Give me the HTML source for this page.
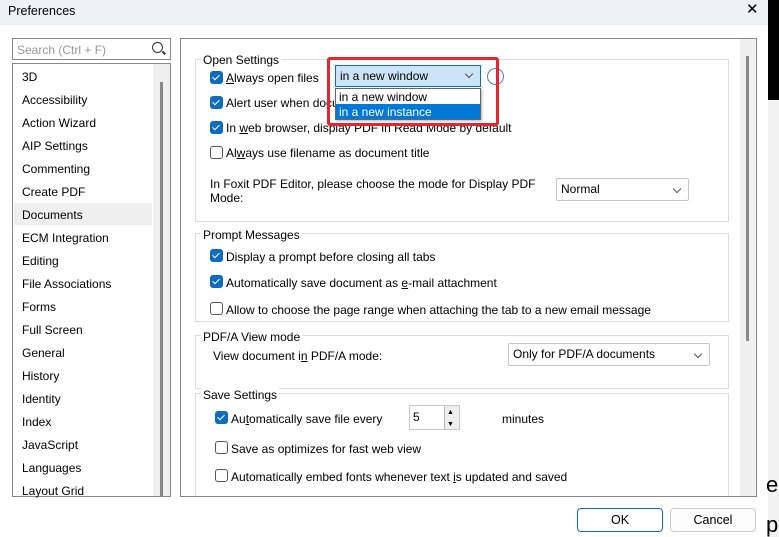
<!DOCTYPE html><html><head><style>
*{box-sizing:border-box;margin:0;padding:0}
body{width:779px;height:537px;overflow:hidden;background:#fff;font-family:"Liberation Sans",sans-serif;font-size:12px;color:#000;position:relative}
.a{position:absolute;white-space:nowrap;line-height:16px;margin-top:1px}
.cb{position:absolute;width:13px;height:13px;border-radius:3px;background:#0f6cbd}
.cb::after{content:"";position:absolute;left:4px;top:2px;width:3px;height:6px;border:solid #fff;border-width:0 1.5px 1.5px 0;transform:rotate(45deg)}
.cu{position:absolute;width:13px;height:13px;border-radius:3px;border:1px solid #555;background:#fff}
.grp{position:absolute;border:1px solid #dcdcdc}
.gl{position:absolute;background:#fff;padding:0 2px;line-height:14px;margin-top:1px}
.sel{position:absolute;border:1px solid #c8c8c8;border-radius:2px;background:#fff;padding-left:4px;line-height:21px}
.chev{position:absolute;right:8px;top:7px;width:6px;height:6px;border:solid #555;border-width:0 1px 1px 0;transform:rotate(45deg)}
u{text-decoration:underline}
.li{position:absolute;left:22px}
</style></head><body>
<div style="position:absolute;left:0;top:0;width:768px;height:25px;background:#eef2f7"></div>
<div class="a" style="left:8px;top:2px;font-size:12.5px">Preferences</div>
<div class="a" style="left:746px;top:1px;font-size:15px;font-weight:300">✕</div>
<div style="position:absolute;left:768px;top:0;width:11px;height:100px;background:#000"></div>
<div style="position:absolute;left:768px;top:100px;width:11px;height:437px;background:#f2f2f2"></div>
<div class="a" style="left:766px;top:476px;font-size:22px">e</div>
<div class="a" style="left:766px;top:516px;font-size:22px">p</div>

<div style="position:absolute;left:12px;top:38px;width:159px;height:22px;border:1px solid #888"></div>
<div class="a" style="left:17px;top:41px;color:#999">Search (Ctrl + F)</div>
<div style="position:absolute;left:152px;top:42px;width:11px;height:11px;border:1.5px solid #333;border-radius:50%"></div>
<div style="position:absolute;left:162px;top:52px;width:4px;height:1.5px;background:#333;transform:rotate(45deg)"></div>

<div style="position:absolute;left:12px;top:63px;width:159px;height:434px;border:1px solid #888"></div>
<div style="position:absolute;left:153px;top:64px;width:17px;height:432px;background:#f0f0f0"></div>
<div style="position:absolute;left:160px;top:82px;width:3px;height:414px;background:#888"></div>
<div style="position:absolute;left:14px;top:203px;width:138px;height:22px;background:#efefef"></div>
<div class="li a" style="top:68px">3D</div>
<div class="li a" style="top:91px">Accessibility</div>
<div class="li a" style="top:114px">Action Wizard</div>
<div class="li a" style="top:137px">AIP Settings</div>
<div class="li a" style="top:160px">Commenting</div>
<div class="li a" style="top:183px">Create PDF</div>
<div class="li a" style="top:206px">Documents</div>
<div class="li a" style="top:229px">ECM Integration</div>
<div class="li a" style="top:252px">Editing</div>
<div class="li a" style="top:275px">File Associations</div>
<div class="li a" style="top:298px">Forms</div>
<div class="li a" style="top:321px">Full Screen</div>
<div class="li a" style="top:344px">General</div>
<div class="li a" style="top:367px">History</div>
<div class="li a" style="top:390px">Identity</div>
<div class="li a" style="top:413px">Index</div>
<div class="li a" style="top:436px">JavaScript</div>
<div class="li a" style="top:459px">Languages</div>
<div class="li a" style="top:482px">Layout Grid</div>

<div style="position:absolute;left:180px;top:38px;width:577px;height:459px;border:1px solid #888"></div>
<div style="position:absolute;left:740px;top:39px;width:16px;height:457px;background:#f0f0f0"></div>
<div style="position:absolute;left:746px;top:56px;width:3px;height:285px;background:#888"></div>

<div class="grp" style="left:195px;top:59px;width:534px;height:163px"></div>
<div class="gl" style="left:201px;top:52px">Open Settings</div>
<div class="cb" style="left:210px;top:71px"></div><div class="a" style="left:226px;top:69px"><u>A</u>lways open files</div>
<div class="cb" style="left:210px;top:96px"></div><div class="a" style="left:226px;top:94px">Alert user when docu</div>
<div class="cb" style="left:210px;top:121px"></div><div class="a" style="left:226px;top:119px">In <u>w</u>eb browser, display PDF in Read Mode by default</div>
<div class="cu" style="left:210px;top:146px"></div><div class="a" style="left:226px;top:144px">Al<u>w</u>ays use filename as document title</div>
<div class="a" style="left:210px;top:175px">In Foxit PDF Editor, please choose the mode for Display PDF</div>
<div class="a" style="left:210px;top:189px">Mode:</div>
<div class="sel" style="left:556px;top:178px;width:133px;height:23px">Normal<span class="chev"></span></div>

<div style="position:absolute;left:335px;top:65px;width:146px;height:22px;background:#cce4f7;border:1px solid #0f6cbd;padding-left:4px;line-height:21px">in a new window<span class="chev" style="right:8px;top:5px"></span></div>
<div style="position:absolute;left:487px;top:68px;width:17px;height:17px;border:1.5px solid #4a7fd4;border-radius:50%"></div>
<div style="position:absolute;left:335px;top:88px;width:146px;height:32px;background:#fff;border:1px solid #666;box-shadow:1px 1px 2px rgba(0,0,0,.3)"></div>
<div class="a" style="left:339px;top:88px">in a new window</div>
<div style="position:absolute;left:336px;top:104px;width:144px;height:15px;background:#0078d7"></div>
<div class="a" style="left:339px;top:103px;color:#fff">in a new instance</div>
<div style="position:absolute;left:327px;top:57px;width:172px;height:69px;border:3px solid #e8242e;border-radius:3px"></div>

<div class="grp" style="left:195px;top:233px;width:534px;height:89px"></div>
<div class="gl" style="left:201px;top:227px">Prompt Messages</div>
<div class="cb" style="left:210px;top:249px"></div><div class="a" style="left:226px;top:248px">Display a prompt before closing all tabs</div>
<div class="cb" style="left:210px;top:275px"></div><div class="a" style="left:226px;top:274px">Automatically save document as <u>e</u>-mail attachment</div>
<div class="cu" style="left:210px;top:302px"></div><div class="a" style="left:226px;top:301px">Allow to choose the page range when attaching the tab to a new email message</div>

<div class="grp" style="left:195px;top:335px;width:534px;height:54px"></div>
<div class="gl" style="left:201px;top:329px">PDF/A View mode</div>
<div class="a" style="left:213px;top:347px">View document i<u>n</u> PDF/A mode:</div>
<div class="sel" style="left:508px;top:343px;width:202px;height:23px">Only for PDF/A documents<span class="chev"></span></div>

<div class="grp" style="left:195px;top:393px;width:534px;height:110px"></div>
<div class="gl" style="left:201px;top:387px">Save Settings</div>
<div class="cb" style="left:215px;top:411px"></div><div class="a" style="left:231px;top:410px">Au<u>t</u>omatically save file every</div>
<div style="position:absolute;left:409px;top:405px;width:51px;height:25px;border:1px solid #c8c8c8;background:#fff"></div>
<div class="a" style="left:413px;top:408px">5</div>
<div style="position:absolute;left:444px;top:406px;width:15px;height:23px;background:#eee;border-left:1px solid #bbb"></div>
<div class="a" style="left:447px;top:404px;font-size:7px">▲</div>
<div class="a" style="left:447px;top:416px;font-size:7px">▼</div>
<div class="a" style="left:502px;top:410px">minutes</div>
<div class="cu" style="left:215px;top:441px"></div><div class="a" style="left:231px;top:440px">Save as optimizes for fast web view</div>
<div class="cu" style="left:215px;top:469px"></div><div class="a" style="left:231px;top:468px">Automatically embed fonts whenever text <u>i</u>s updated and saved</div>
<div style="position:absolute;left:181px;top:497px;width:576px;height:40px;background:#fff"></div>
<div style="position:absolute;left:180px;top:496px;width:577px;height:1px;background:#888"></div>

<div style="position:absolute;left:577px;top:508px;width:86px;height:24px;border:1px solid #0f6cbd;border-radius:4px;text-align:center;line-height:23px;font-size:12.5px">OK</div>
<div style="position:absolute;left:670px;top:508px;width:86px;height:24px;border:1px solid #ccc;border-radius:4px;text-align:center;line-height:23px;font-size:12.5px;background:#fdfdfd">Cancel</div>
</body></html>
